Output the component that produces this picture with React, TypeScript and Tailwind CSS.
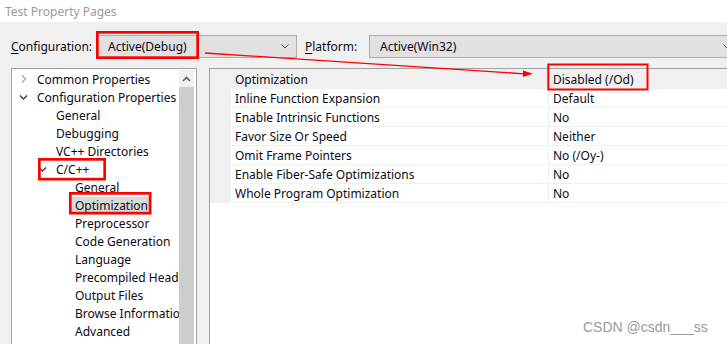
import React from 'react'

type Item = { label: string; level: 0 | 1 | 2; chevron?: 'right' | 'down'; selected?: boolean }

const tree: Item[] = [
  { label: 'Common Properties', level: 0, chevron: 'right' },
  { label: 'Configuration Properties', level: 0, chevron: 'down' },
  { label: 'General', level: 1 },
  { label: 'Debugging', level: 1 },
  { label: 'VC++ Directories', level: 1 },
  { label: 'C/C++', level: 1, chevron: 'down' },
  { label: 'General', level: 2 },
  { label: 'Optimization', level: 2, selected: true },
  { label: 'Preprocessor', level: 2 },
  { label: 'Code Generation', level: 2 },
  { label: 'Language', level: 2 },
  { label: 'Precompiled Headers', level: 2 },
  { label: 'Output Files', level: 2 },
  { label: 'Browse Information', level: 2 },
  { label: 'Advanced', level: 2 },
  { label: 'All Options', level: 2 },
]

const indent = ['pl-[4px]', 'pl-[23px]', 'pl-[42px]']

const properties: [string, string][] = [
  ['Optimization', 'Disabled (/Od)'],
  ['Inline Function Expansion', 'Default'],
  ['Enable Intrinsic Functions', 'No'],
  ['Favor Size Or Speed', 'Neither'],
  ['Omit Frame Pointers', 'No (/Oy-)'],
  ['Enable Fiber-Safe Optimizations', 'No'],
  ['Whole Program Optimization', 'No'],
]

function Chevron({ dir }: { dir: 'right' | 'down' }) {
  if (dir === 'right') {
    return (
      <svg width="15" height="10" viewBox="0 0 15 10">
        <polyline points="6,1.5 9.5,5 6,8.5" fill="none" stroke="#a6a6a6" strokeWidth="1.3" />
      </svg>
    )
  }
  return (
    <svg width="15" height="10" viewBox="0 0 15 10">
      <polyline points="4,3.5 7.5,7 11,3.5" fill="none" stroke="#404040" strokeWidth="1.4" />
    </svg>
  )
}

function Dropdown({ text, width }: { text: string; width: string }) {
  return (
    <div className={`${width} shrink-0 h-[23px] flex items-center border border-[#adadad] bg-[#e1e1e1] pl-[10px] pr-[7px]`}>
      <span className="flex-1 pt-[1px]">{text}</span>
      <svg width="8" height="5" viewBox="0 0 8 5">
        <polyline points="0.5,0.5 4,4 7.5,0.5" fill="none" stroke="#505050" strokeWidth="1" />
      </svg>
    </div>
  )
}

export default function App() {
  return (
    <div className="relative w-[727px] h-[344px] overflow-hidden bg-[#f0f0f0] text-[12px] text-[#0a0a14] font-['Noto_Sans',sans-serif] leading-none">
      {/* title bar */}
      <div className="h-[22px] bg-white flex items-center pl-[5px] pt-[1px] text-[#9a9a9a]">Test Property Pages</div>

      {/* configuration row */}
      <div className="mt-[13px] flex items-center pl-[11px]">
        <span className="w-[86px] shrink-0 pt-[1px]">
          <span className="underline underline-offset-2">C</span>onfiguration:
        </span>
        <Dropdown text="Active(Debug)" width="w-[200px]" />
        <span className="ml-[8px] w-[64px] shrink-0 pt-[1px]">
          <span className="underline underline-offset-2">P</span>latform:
        </span>
        <Dropdown text="Active(Win32)" width="w-[370px]" />
      </div>

      {/* panels */}
      <div className="mt-[10px] flex pl-[11px] gap-[12px]">
        {/* tree */}
        <div className="w-[186px] shrink-0 h-[290px] border border-[#a0a0a0] bg-white flex">
          <div className="flex-1 min-w-0 overflow-hidden pt-[1px]">
            {tree.map((it, i) => (
              <div key={i} className={`h-[18px] flex items-center whitespace-nowrap ${indent[it.level]}`}>
                <span className="w-[15px] shrink-0 flex justify-center">{it.chevron && <Chevron dir={it.chevron} />}</span>
                <span
                  className={`ml-[3px] px-[3px] h-[17px] shrink-0 flex items-center pt-[2px] ${it.selected ? 'bg-[#d9d9d9]' : ''}`}
                >
                  {it.label}
                </span>
              </div>
            ))}
          </div>
          <div className="w-[15px] shrink-0 mr-[2px] mt-[1px] flex flex-col">
            <div className="h-[17px] bg-[#f0f0f0] flex items-center justify-center">
              <svg width="9" height="6" viewBox="0 0 9 6">
                <polyline points="1,5 4.5,1.5 8,5" fill="none" stroke="#606060" strokeWidth="1.6" />
              </svg>
            </div>
            <div className="flex-1 bg-[#cdcdcd]" />
          </div>
        </div>

        {/* property grid */}
        <div className="w-[540px] shrink-0 h-[290px] border-l border-t border-[#a0a0a0] bg-white">
          {properties.map(([name, value], i) => (
            <div key={i} className={`h-[19px] flex border-b border-[#f0f0f0] ${i === 0 ? 'h-[20px] bg-[#f0f0f0]' : ''}`}>
              <div className="w-[21px] shrink-0 bg-[#f0f0f0]" />
              <div className="w-[318px] shrink-0 pl-[4px] pt-[2px] flex items-center border-r border-[#f0f0f0]">{name}</div>
              <div className="flex-1 pl-[4px] pt-[2px] flex items-center">{value}</div>
            </div>
          ))}
        </div>
      </div>

      {/* annotations */}
      <svg className="absolute left-0 top-0 pointer-events-none" width="727" height="344" viewBox="0 0 727 344">
        <g fill="none" stroke="#ff0000">
          <rect x="97.35" y="32.35" width="100.3" height="25.3" strokeWidth="2.7" />
          <rect x="39.35" y="159.35" width="65.3" height="19.8" strokeWidth="2.7" />
          <rect x="70.35" y="193.35" width="79.8" height="19.8" strokeWidth="2.7" />
          <rect x="548.3" y="64.5" width="99.2" height="25" strokeWidth="2" />
          <line x1="205" y1="53" x2="524" y2="73.8" strokeWidth="1.3" />
        </g>
        <polygon points="523,70.6 533,73.8 523,77" fill="#ff0000" />
      </svg>

      <div className="absolute left-[583px] top-[320px] text-[14px] text-[#9a9a9a] font-['Liberation_Sans',sans-serif]">
        CSDN @csdn___ss
      </div>
    </div>
  )
}
